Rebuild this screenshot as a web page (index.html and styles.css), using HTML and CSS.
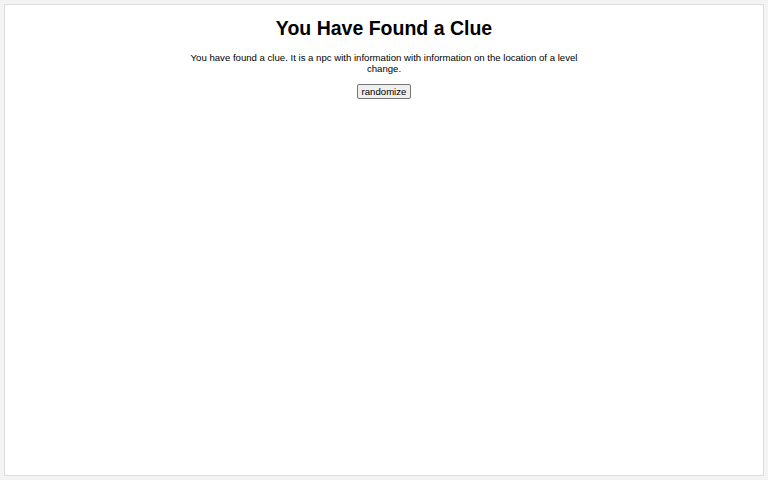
FILE: index.html
```html
<!DOCTYPE html>
<html lang="en">
<head>
<meta charset="utf-8">
<title>You Have Found a Clue</title>
<link rel="stylesheet" href="styles.css">
</head>
<body>
<main class="card">
  <h1 class="title">You Have Found a Clue</h1>
  <p class="desc">You have found a clue. It is a npc with information with information on the location of a level change.</p>
  <button class="btn" type="button">randomize</button>
</main>
</body>
</html>
```
FILE: styles.css
```css
html, body {
  margin: 0;
  height: 100%;
}
body {
  background: #f3f3f3;
  padding: 4px;
  box-sizing: border-box;
  font-family: "Liberation Sans", Arial, sans-serif;
  color: #000;
}
.card {
  height: 472px;
  box-sizing: border-box;
  background: #fff;
  border: 1px solid #dcdcdc;
  display: flex;
  flex-direction: column;
  align-items: center;
  padding-top: 11px;
}
.title {
  margin: 0;
  font-size: 19.5px;
  font-weight: bold;
  line-height: 24px;
}
.desc {
  margin: 12px 0 0;
  max-width: 400px;
  font-size: 9.6px;
  line-height: 11px;
  text-align: center;
}
.btn {
  margin-top: 10px;
  font-family: "Liberation Sans", Arial, sans-serif;
  font-size: 9.6px;
  padding: 1px 4px;
  background: #efefef;
  border: 1px solid #767676;
  border-radius: 2px;
  color: #000;
}
```
